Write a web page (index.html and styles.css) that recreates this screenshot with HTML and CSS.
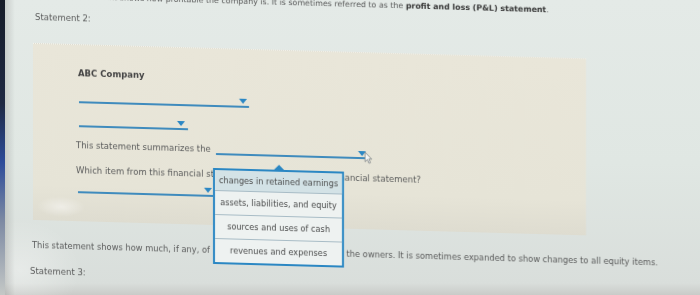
FILE: index.html
```html
<!DOCTYPE html>
<html lang="en">
<head>
    <meta charset="UTF-8">
    <meta name="viewport" content="width=device-width, initial-scale=1.0">
    <title>Statement 2</title>
    <link rel="stylesheet" href="styles.css">
</head>
<body>

    <div class="page">
        <p class="lead">This statement shows how profitable the company is. It is sometimes referred to as the <b>profit and loss (P&amp;L) statement</b>.</p>

        <p class="label">Statement 2:</p>

        <div class="panel">
            <div class="company">ABC Company</div>
            <div class="dd dd-wide"><span class="caret"></span></div>
            <div class="dd dd-short"><span class="caret"></span></div>

            <div class="row">
                <span>This statement summarizes the</span>
                <div class="dd dd-inline"><span class="caret"></span></div>
            </div>

            <p class="question">Which item from this financial statement is used in the next financial statement?</p>
            <div class="dd dd-answer"><span class="caret"></span></div>
        </div>

        <p class="note">This statement shows how much, if any, of its net earnings was paid out to the owners. It is sometimes expanded to show changes to all equity items.</p>

        <p class="label label-3">Statement 3:</p>

        <!-- открытый список для третьего поля -->
        <ul class="menu">
            <li class="active">changes in retained earnings</li>
            <li>assets, liabilities, and equity</li>
            <li>sources and uses of cash</li>
            <li>revenues and expenses</li>
        </ul>

        <svg class="cursor" width="9" height="13" viewBox="0 0 9 13">
            <path d="M1 1 L1 10.5 L3.3 8.4 L5 12 L6.5 11.3 L4.8 7.8 L7.8 7.8 Z" fill="#f4f6f5" stroke="#7a7f80" stroke-width="0.8"/>
        </svg>
    </div>

</body>
</html>
```

FILE: styles.css
```css
html {
    height: 100%;
    background:
        linear-gradient(to bottom, #161c28 0%, #1f2a44 35%, #2c4c9a 55%, #7d8aa3 75%, #c4c8c6 100%) 0 0 / 5px 100% no-repeat,
        linear-gradient(to right, rgba(0, 0, 0, 0.12), rgba(0, 0, 0, 0)) 5px 0 / 10px 100% no-repeat,
        radial-gradient(ellipse 60px 50px at 20px 270px, rgba(255, 255, 255, 0.35), rgba(255, 255, 255, 0)),
        linear-gradient(to bottom, #e4eae7 0%, #e0e7e3 55%, #d9dedb 96%, #c9cbc8 100%);
}
body {
    margin: 0;
    overflow: hidden;
    font-family: "DejaVu Sans", Verdana, sans-serif;
    font-size: 8.5px;
    line-height: 12px;
    color: #5a5b5b;
}
p {
    margin: 0;
}
.page {
    position: relative;
    margin-top: -11px;
    transform: skewY(1.6deg);
    transform-origin: 0 0;
    filter: blur(0.3px);
}
.lead {
    margin-left: 58px;
    font-size: 7.9px;
    white-space: nowrap;
}
.lead b {
    color: #383838;
}
.label {
    margin: 9px 0 0 35px;
}
.panel {
    width: 553px;
    box-sizing: border-box;
    margin: 20px 0 0 33px;
    padding: 22px 0 28.5px 45px;
    border-top: 1px dotted #f6f5ee;
    background:
        radial-gradient(ellipse 24px 10px at 28px 162px, rgba(255, 255, 255, 0.45), rgba(255, 255, 255, 0)),
        linear-gradient(to bottom, #e9e6d9 0%, #e6e4d7 80%, #dedcd0 100%);
}
.company {
    font-weight: bold;
    color: #444;
}
.dd {
    position: relative;
    height: 12px;
    border-bottom: 2px solid #3f8bbd;
}
.caret {
    position: absolute;
    right: 2px;
    bottom: 2px;
    border-left: 4.5px solid transparent;
    border-right: 4.5px solid transparent;
    border-top: 5px solid #2b87c4;
}
.dd-wide {
    width: 170px;
    margin: 10px 0 0 1px;
}
.dd-short {
    width: 109px;
    margin: 10px 0 0 1px;
}
.dd-short .caret {
    right: 3px;
}
.row {
    display: flex;
    align-items: flex-end;
    margin: 10px 0 0 -2px;
    white-space: nowrap;
}
.dd-inline {
    width: 153px;
    margin-left: 5px;
}
.dd-inline .caret {
    right: 3px;
    bottom: 1px;
}
.question {
    margin: 12.5px 0 0 -2px;
    white-space: nowrap;
}
.dd-answer {
    width: 135px;
    margin-top: 3px;
}
.dd-answer .caret {
    right: 1px;
}
.note {
    margin: 19px 0 0 32px;
    font-size: 8.3px;
    white-space: nowrap;
}
.label-3 {
    margin: 14px 0 0 30px;
}
.menu {
    position: absolute;
    top: 173px;
    left: 213px;
    width: 131px;
    box-sizing: border-box;
    margin: 0;
    padding: 0;
    list-style: none;
    border: 2px solid #2b87c3;
    background: #eef2f1;
    font-size: 8.2px;
    color: #4b4c4c;
}
.menu::before {
    content: "";
    position: absolute;
    top: -7px;
    left: 50%;
    margin-left: -5px;
    border-left: 5px solid transparent;
    border-right: 5px solid transparent;
    border-bottom: 5px solid #2b87c3;
}
.menu li {
    height: 23px;
    line-height: 23px;
    text-align: center;
    white-space: nowrap;
    border-top: 1px solid #a8bcc6;
}
.menu li.active {
    height: 20px;
    line-height: 20px;
    border-top: 0;
    background: #d3e2e6;
}
.cursor {
    position: absolute;
    top: 152px;
    left: 364px;
}
```
